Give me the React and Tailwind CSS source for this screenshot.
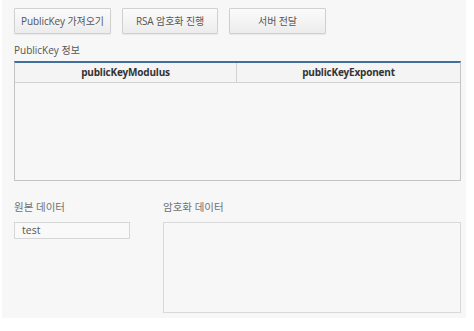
import React from "react";

const font = { fontFamily: '"Open Sans", "Noto Sans CJK KR", sans-serif' };

function Btn({ children, w }) {
  return (
    <button
      className={`h-[26px] ${w} border border-[#d0d0d0] bg-gradient-to-b from-[#fbfbfb] to-[#ececec] text-[10px] tracking-[-0.1px] text-[#555] rounded-[1px] shadow-[0_1px_1px_rgba(0,0,0,0.06)]`}
    >
      {children}
    </button>
  );
}

export default function App() {
  return (
    <div className="w-[474px] h-[331px] bg-white overflow-hidden" style={font}>
      <div className="ml-[2px] w-[464px] h-[318px] bg-[#f7f7f7] pl-[12px] pt-[8px]">
        <div className="flex gap-[11px]">
          <Btn w="w-[97px]">PublicKey 가져오기</Btn>
          <Btn w="w-[96px]">RSA 암호화 진행</Btn>
          <Btn w="w-[97px]">서버 전달</Btn>
        </div>
        <div className="mt-[9px] text-[10px] leading-[14px] text-[#555]">PublicKey 정보</div>
        <div className="mt-[4px] w-[447px] h-[120px] border border-[#c4c4c4] border-t-2 border-t-[#41709f] bg-[#f7f7f7]">
          <div className="flex h-[20px] border-b border-[#d2d2d2] bg-[#f4f4f4] text-[10px] tracking-[-0.2px] font-bold text-[#333]">
            <div className="w-[222px] border-r border-[#d2d2d2] flex items-center justify-center">publicKeyModulus</div>
            <div className="flex-1 flex items-center justify-center">publicKeyExponent</div>
          </div>
        </div>
        <div className="mt-[19px] flex">
          <div className="w-[149px]">
            <div className="text-[10.5px] leading-[14px] text-[#707070]">원본 데이터</div>
            <div className="mt-[8px] w-[116px] h-[17px] border border-[#d6d6d6] bg-[#f9f9f9] pl-[7px] text-[10.5px] leading-[15px] text-[#555]">test</div>
          </div>
          <div>
            <div className="text-[10.5px] leading-[14px] text-[#707070]">암호화 데이터</div>
            <div className="mt-[8px] w-[298px] h-[91px] border border-[#d9d9d9] bg-[#f7f7f7]"></div>
          </div>
        </div>
      </div>
    </div>
  );
}
